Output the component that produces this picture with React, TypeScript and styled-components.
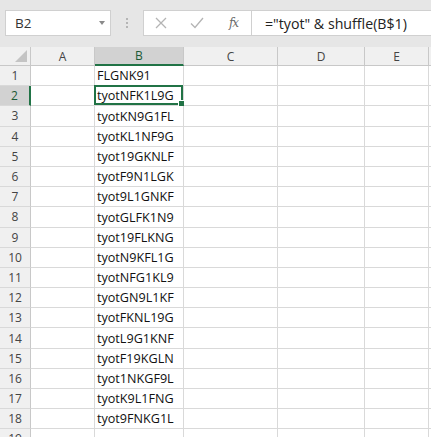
import { Fragment } from "react";
import styled, { createGlobalStyle } from "styled-components";

const GlobalStyle = createGlobalStyle`
  html, body {
    margin: 0;
    padding: 0;
    background: #ffffff;
    overflow: hidden;
  }
`

const GREEN = '#217346'
const GRID = '#d9d9d9'

const Page = styled.div`
  width: 431px;
  height: 437px;
  display: flex;
  flex-direction: column;
  font-family: "Open Sans", "Noto Sans", sans-serif;
  overflow: hidden;
`

const FormulaBar = styled.div`
  height: 46px;
  flex: none;
  background: #e6e6e6;
  box-sizing: border-box;
  padding: 10px 0 10px 5px;
  display: flex;
  align-items: stretch;
`

const NameBox = styled.div`
  width: 106px;
  box-sizing: border-box;
  background: #ffffff;
  border: 1px solid #d0d0d0;
  display: flex;
  align-items: center;
  justify-content: space-between;
  padding: 0 5px 0 9px;
  font-size: 13.5px;
  color: #333;
`

const Caret = styled.span`
  width: 0;
  height: 0;
  border-left: 3px solid transparent;
  border-right: 3px solid transparent;
  border-top: 4px solid #8a8a8a;
`

const Grip = styled.div`
  width: 32px;
  display: flex;
  flex-direction: column;
  align-items: center;
  justify-content: center;
  gap: 2px;
`

const GripDot = styled.span`
  width: 2px;
  height: 2px;
  background: #b5b5b5;
`

const FormulaBox = styled.div`
  flex: 1;
  display: flex;
  align-items: stretch;
  background: #ffffff;
  border: 1px solid #d0d0d0;
  border-right: none;
`

const IconCell = styled.div<{ $w: number }>`
  width: ${p => p.$w}px;
  display: flex;
  align-items: center;
  justify-content: center;
`

const Fx = styled.span`
  font-family: "DejaVu Serif", "Liberation Serif", serif;
  font-style: italic;
  font-size: 12px;
  color: #6b6b6b;
  letter-spacing: -1px;
`

const Divider = styled.div`
  width: 1px;
  background: #d0d0d0;
`

const FormulaText = styled.div`
  padding-left: 13px;
  display: flex;
  align-items: center;
  font-size: 14.2px;
  color: #222;
  white-space: nowrap;
`

const Gap = styled.div`
  height: 1px;
  flex: none;
  background: #e6e6e6;
`

const Sheet = styled.div`
  display: grid;
  grid-template-columns: 31px 64px 89px 94px 87px 64px 1fr;
  grid-auto-rows: 20.2px;
  grid-template-rows: 19px;
  align-content: start;
`

const Corner = styled.div`
  background: #f0f0f0;
  border-right: 1px solid #c8c8c8;
  border-bottom: 1px solid #c8c8c8;
  box-sizing: border-box;
  position: relative;
  &::after {
    content: "";
    position: absolute;
    right: 3px;
    bottom: 3px;
    width: 0;
    height: 0;
    border-left: 12px solid transparent;
    border-bottom: 12px solid #c4c4c4;
  }
`

const ColHeader = styled.div<{ $active?: boolean }>`
  background: ${p => (p.$active ? '#d2d2d2' : '#f0f0f0')};
  border-right: 1px solid #c8c8c8;
  border-bottom: ${p => (p.$active ? `2px solid ${GREEN}` : '1px solid #c8c8c8')};
  box-sizing: border-box;
  display: flex;
  align-items: center;
  justify-content: center;
  font-size: 12px;
  color: ${p => (p.$active ? '#1c5a36' : '#444')};
`

const RowHeader = styled.div<{ $active?: boolean }>`
  background: ${p => (p.$active ? '#d2d2d2' : '#f0f0f0')};
  border-right: ${p => (p.$active ? `2px solid ${GREEN}` : '1px solid #c8c8c8')};
  border-bottom: 1px solid ${GRID};
  box-sizing: border-box;
  display: flex;
  align-items: center;
  justify-content: center;
  font-size: 12px;
  color: ${p => (p.$active ? '#1c5a36' : '#444')};
`

const Cell = styled.div`
  border-right: 1px solid ${GRID};
  border-bottom: 1px solid ${GRID};
  box-sizing: border-box;
  display: flex;
  align-items: flex-end;
  padding: 0 0 1px 2px;
  font-size: 12.6px;
  color: #111;
  white-space: nowrap;
  position: relative;
`

const Selection = styled.div`
  position: absolute;
  left: -1px;
  top: -1px;
  right: 0;
  bottom: 0;
  border: 2px solid ${GREEN};
  pointer-events: none;
  &::after {
    content: "";
    position: absolute;
    right: -4px;
    bottom: -4px;
    width: 5px;
    height: 5px;
    background: ${GREEN};
    border: 1px solid #fff;
  }
`

const columns = ['A', 'B', 'C', 'D', 'E', '']

const values = [
  'FLGNK91',
  'tyotNFK1L9G',
  'tyotKN9G1FL',
  'tyotKL1NF9G',
  'tyot19GKNLF',
  'tyotF9N1LGK',
  'tyot9L1GNKF',
  'tyotGLFK1N9',
  'tyot19FLKNG',
  'tyotN9KFL1G',
  'tyotNFG1KL9',
  'tyotGN9L1KF',
  'tyotFKNL19G',
  'tyotL9G1KNF',
  'tyotF19KGLN',
  'tyot1NKGF9L',
  'tyotK9L1FNG',
  'tyot9FNKG1L',
  '',
]

function App() {
  return (
    <Page>
      <GlobalStyle />
      <FormulaBar>
        <NameBox>
          <span>B2</span>
          <Caret />
        </NameBox>
        <Grip>
          <GripDot />
          <GripDot />
          <GripDot />
        </Grip>
        <FormulaBox>
          <IconCell $w={34}>
            <svg width="12" height="12" viewBox="0 0 12 12">
              <path d="M1 1 L11 11 M11 1 L1 11" stroke="#b4b4b4" strokeWidth="1.3" fill="none" />
            </svg>
          </IconCell>
          <IconCell $w={38}>
            <svg width="14" height="12" viewBox="0 0 14 12">
              <path d="M1 6.5 L5 10.5 L13 1" stroke="#b4b4b4" strokeWidth="1.3" fill="none" />
            </svg>
          </IconCell>
          <IconCell $w={35}>
            <Fx>fx</Fx>
          </IconCell>
          <Divider />
          <FormulaText>="tyot" &amp; shuffle(B$1)</FormulaText>
        </FormulaBox>
      </FormulaBar>
      <Gap />
      <Sheet>
        <Corner />
        {columns.map((c, i) => (
          <ColHeader key={i} $active={c === 'B'}>{c}</ColHeader>
        ))}
        {values.map((v, r) => (
          <Fragment key={r}>
            <RowHeader $active={r === 1}>{r + 1}</RowHeader>
            {columns.map((c, i) => (
              <Cell key={i}>
                {c === 'B' ? v : ''}
                {c === 'B' && r === 1 ? <Selection /> : null}
              </Cell>
            ))}
          </Fragment>
        ))}
      </Sheet>
    </Page>
  )
}

export default App
